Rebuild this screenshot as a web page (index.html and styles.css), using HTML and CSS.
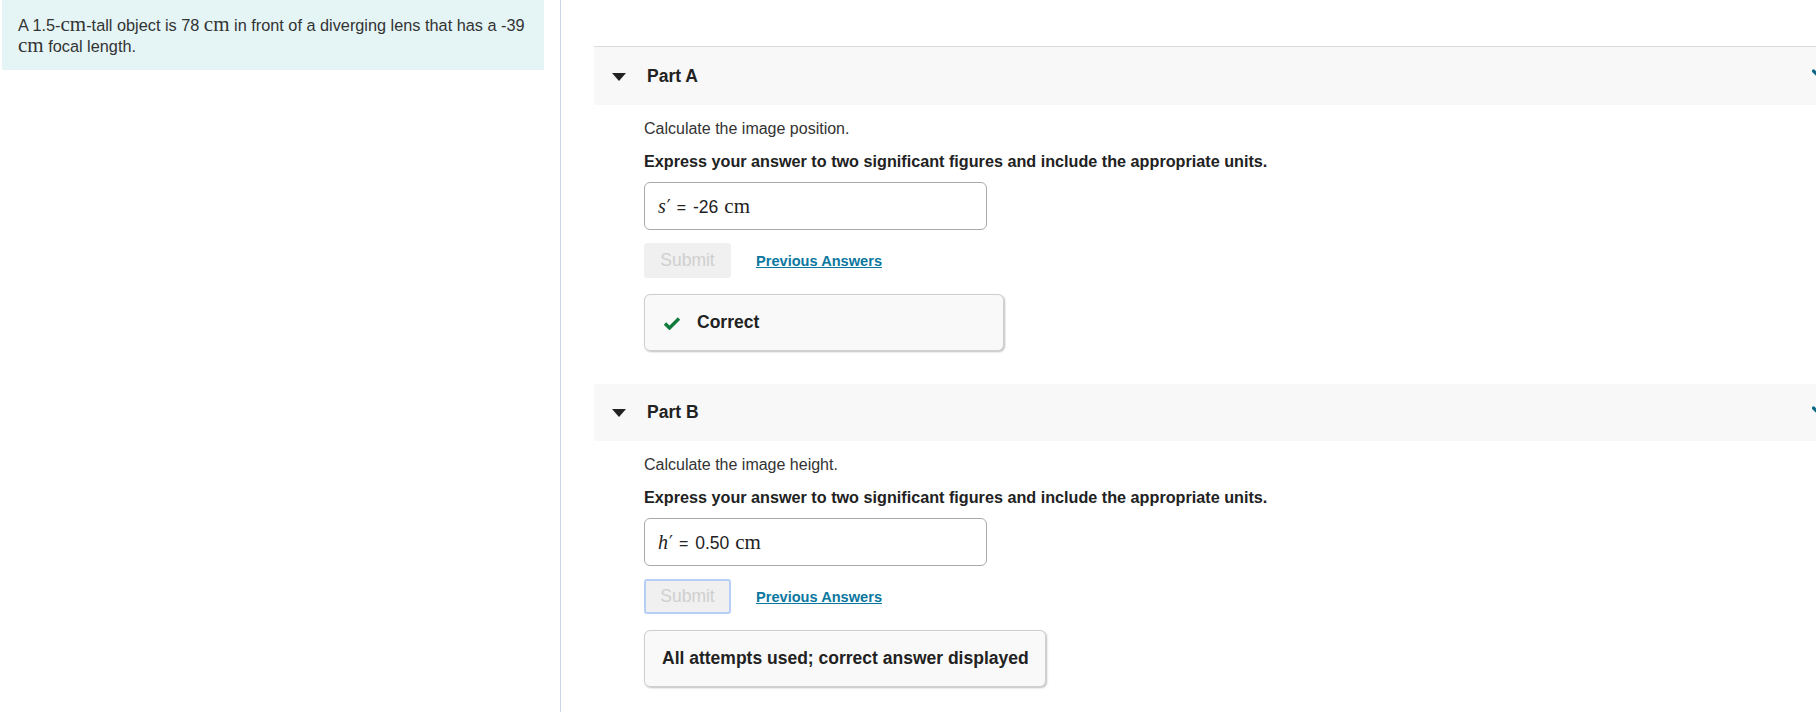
FILE: index.html
```html
<!DOCTYPE html>
<html lang="en">
<head>
<meta charset="utf-8">
<title>Diverging lens</title>
<link rel="stylesheet" href="styles.css">
</head>
<body>
<div class="page">
  <aside class="left">
    <div class="problem">
      A 1.5-<span class="math">cm</span>-tall object is 78 <span class="math">cm</span> in front of a diverging lens that has a -39 <span class="math">cm</span> focal length.
    </div>
  </aside>
  <main class="right">
    <section class="part part-first">
      <header class="part-head">
        <svg class="caret" width="14" height="8" viewBox="0 0 14 8"><path d="M0 0 H14 L7 8 Z" fill="#222"/></svg>
        <span class="part-title">Part A</span>
        <svg class="done" width="18" height="16" viewBox="0 0 18 16"><path d="M1.5 2 L7 7.5 L17 -2" fill="none" stroke="#0e6a85" stroke-width="3.2" stroke-linecap="round" stroke-linejoin="round"/></svg>
      </header>
      <div class="part-body">
        <p class="prompt">Calculate the image position.</p>
        <p class="instr">Express your answer to two significant figures and include the appropriate units.</p>
        <div class="answer"><span class="var">s</span><span class="prime">′</span><span class="eq">=</span><span class="num">-26</span><span class="unit">cm</span></div>
        <div class="actions">
          <button class="submit" type="button">Submit</button>
          <a class="prev" href="#">Previous Answers</a>
        </div>
        <div class="feedback">
          <svg class="tick" width="18" height="14" viewBox="0 0 18 14"><path d="M2 7.5 L6.5 12 L16 2.5" fill="none" stroke="#127a3c" stroke-width="3.4" stroke-linejoin="miter"/></svg>
          <span>Correct</span>
        </div>
      </div>
    </section>
    <section class="part">
      <header class="part-head">
        <svg class="caret" width="14" height="8" viewBox="0 0 14 8"><path d="M0 0 H14 L7 8 Z" fill="#222"/></svg>
        <span class="part-title">Part B</span>
        <svg class="done" width="18" height="16" viewBox="0 0 18 16"><path d="M1.5 2 L7 7.5 L17 -2" fill="none" stroke="#0e6a85" stroke-width="3.2" stroke-linecap="round" stroke-linejoin="round"/></svg>
      </header>
      <div class="part-body">
        <p class="prompt">Calculate the image height.</p>
        <p class="instr">Express your answer to two significant figures and include the appropriate units.</p>
        <div class="answer"><span class="var">h</span><span class="prime">′</span><span class="eq">=</span><span class="num">0.50</span><span class="unit">cm</span></div>
        <div class="actions">
          <button class="submit focused" type="button">Submit</button>
          <a class="prev" href="#">Previous Answers</a>
        </div>
        <div class="feedback wide">
          <span>All attempts used; correct answer displayed</span>
        </div>
      </div>
    </section>
  </main>
</div>
</body>
</html>
```

FILE: styles.css
```css
html, body {
  margin: 0;
  padding: 0;
  overflow: hidden;
  background: #fff;
}
body {
  font-family: "Liberation Sans", Arial, sans-serif;
  color: #333;
  font-size: 16px;
}
.page {
  display: flex;
  height: 712px;
}
.left {
  width: 560px;
  flex: none;
  border-right: 1px solid #c9d7e4;
}
.problem {
  margin-left: 2px;
  width: 542px;
  box-sizing: border-box;
  background: #e5f5f6;
  padding: 14px 16px 14px 16px;
  line-height: 20px;
  font-size: 16.3px;
  color: #333;
}
.math {
  font-family: "Liberation Serif", "Times New Roman", serif;
  font-size: 21px;
  line-height: 1;
}
.right {
  flex: 1;
  padding: 46px 0 0 33px;
  overflow: hidden;
}
.part {
  width: 1242px;
  margin-bottom: 33px;
}
.part-first {
  border-top: 1px solid #dcdcdc;
}
.part-head {
  height: 57px;
  background: #f8f8f8;
  display: flex;
  align-items: center;
  padding: 0 6px 0 18px;
}
.part-first .part-head {
  height: 58px;
}
.caret {
  flex: none;
  margin-top: 1px;
}
.part-title {
  margin-left: 21px;
  font-weight: bold;
  font-size: 17.5px;
  color: #222;
}
.done {
  margin-left: auto;
  flex: none;
  margin-top: 2px;
}
.part-body {
  padding-left: 50px;
}
.prompt {
  margin: 14px 0 0 0;
  line-height: 20px;
  font-size: 16px;
  color: #333;
}
.instr {
  margin: 12px 0 0 0;
  line-height: 20px;
  font-size: 16.2px;
  font-weight: bold;
  color: #222;
}
.answer {
  margin-top: 11px;
  width: 343px;
  height: 48px;
  box-sizing: border-box;
  border: 1px solid #aaa;
  border-radius: 6px;
  display: flex;
  align-items: baseline;
  padding: 13px 0 0 13px;
  color: #222;
  line-height: 20px;
}
.var {
  font-family: "Liberation Serif", "Times New Roman", serif;
  font-style: italic;
  font-size: 20px;
}
.prime {
  font-family: "DejaVu Sans", sans-serif;
  font-size: 17px;
  margin-left: 1px;
  position: relative;
  top: -1px;
}
.eq {
  font-family: "Liberation Sans", Arial, sans-serif;
  font-size: 16px;
  margin-left: 6px;
}
.num {
  font-family: "Liberation Sans", Arial, sans-serif;
  font-size: 17.5px;
  margin-left: 7px;
}
.unit {
  font-family: "Liberation Serif", "Times New Roman", serif;
  font-size: 21px;
  margin-left: 6px;
}
.actions {
  margin-top: 13px;
  display: flex;
  align-items: center;
  height: 35px;
}
.submit {
  width: 87px;
  height: 35px;
  box-sizing: border-box;
  border: 1px solid #f0f0f0;
  background: #f0f0f0;
  border-radius: 3px;
  color: #cfcfcf;
  font-family: "Liberation Sans", Arial, sans-serif;
  font-size: 17.5px;
  padding: 0;
}
.submit.focused {
  border: 2px solid #b7cff7;
}
.prev {
  margin-left: 25px;
  font-weight: bold;
  font-size: 14.6px;
  color: #0a77a0;
  text-decoration: underline;
}
.feedback {
  margin-top: 16px;
  width: 360px;
  height: 57px;
  box-sizing: border-box;
  border: 1px solid #cfcfcf;
  border-radius: 6px;
  background: #f9f9f9;
  box-shadow: 1px 1px 2px rgba(0, 0, 0, 0.25);
  display: flex;
  align-items: center;
  padding-left: 18px;
  font-size: 17.5px;
  font-weight: bold;
  color: #222;
}
.feedback.wide {
  width: 402px;
  padding-left: 17px;
}
.tick {
  flex: none;
  margin-right: 16px;
}
```
